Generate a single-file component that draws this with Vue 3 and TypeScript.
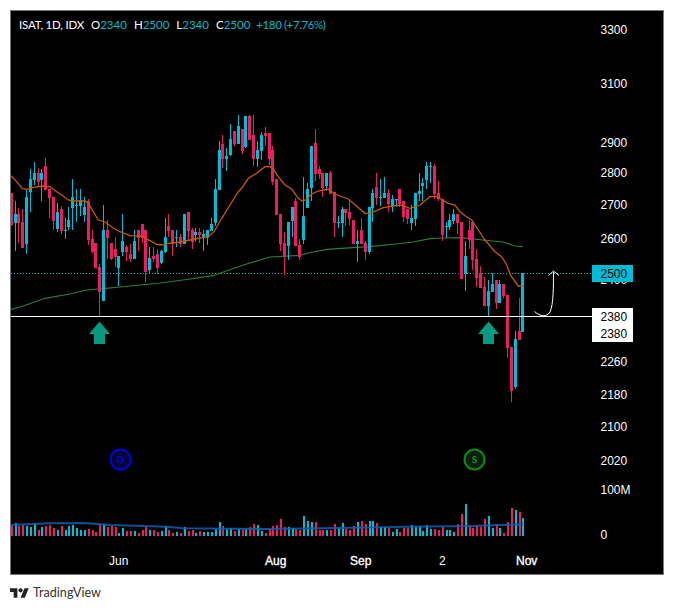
<script setup lang="ts">
type Raw = [number, number, number, number, number];

const segments: { base: number; bars: Raw[] }[] = [
  { base: 150, bars: [
    [129,129,225,228,0],[153,192,219,303,1],[175,192,219,279,0],[178,216,294,294,0],[120,141,282,312,1],
    [57,87,126,186,1],[36,69,90,105,1],[54,69,96,108,0],[57,69,90,153,1],[24,48,120,120,0],
    [117,117,144,204,0],[141,141,213,240,0],[159,186,237,246,1],[168,177,243,252,0],[204,240,243,267,1],
    [171,210,231,240,1],[87,141,174,240,1],[117,165,168,216,1],[117,150,168,198,1],[141,171,195,216,1],
    [147,153,270,285,0],[240,267,306,309,0],[279,279,354,354,0],[342,351,426,498,0],[165,240,453,453,1],
    [210,240,264,327,0],[279,279,327,330,0],[261,297,321,351,0],[318,318,354,408,1],[192,273,306,318,1],
    [285,291,306,333,0],[282,312,327,336,0],[240,273,327,327,1],[240,240,264,303,0],
  ] },
  { base: 110, bars: [
    [342,342,384,399,0],[360,360,486,515,0],[411,444,480,489,1],[411,438,447,456,0],[417,432,474,492,0],
    [420,423,459,462,1],[324,381,426,429,1],[312,348,363,381,0],[360,360,402,438,0],[360,381,384,411,1],
    [372,381,402,411,0],[312,312,402,402,1],[306,306,363,393,0],[354,360,396,417,0],[354,366,375,393,1],
    [354,366,375,399,0],[360,372,384,423,1],[360,360,384,405,1],[324,342,363,363,1],[207,237,339,348,1],
    [93,120,240,240,1],[75,102,147,174,0],[114,138,147,183,1],[42,87,135,138,1],[63,63,102,108,0],
    [15,48,102,102,1],[57,57,123,132,0],[18,18,111,114,1],[15,18,90,90,0],[15,75,147,168,0],
    [93,120,147,171,1],[66,75,123,150,1],[51,69,78,108,0],[69,69,147,165,0],
  ] },
  { base: 120, bars: [
    [78,90,186,195,0],[177,177,285,285,0],[282,282,372,393,0],[336,369,411,465,0],[306,306,378,420,1],
    [261,261,303,351,1],[234,243,378,378,0],[357,375,411,420,0],[171,288,360,372,1],[189,207,264,264,1],
    [78,78,204,243,1],[27,69,162,183,0],[138,147,162,177,0],[159,159,204,231,0],[159,159,198,213,1],
    [153,159,222,222,0],[216,216,309,351,0],[288,306,309,324,1],[261,267,309,351,1],[267,267,279,318,0],
    [240,276,297,315,0],[300,300,372,372,0],[330,363,372,426,1],[294,330,372,372,0],[363,369,396,420,0],
    [261,261,396,402,1],[207,219,264,306,1],[159,201,234,255,0],[177,231,234,258,1],[171,219,234,234,1],
    [207,219,252,276,0],[225,237,258,276,1],[237,237,240,261,1],[207,207,252,261,0],
  ] },
  { base: 150, bars: [
    [153,153,201,216,0],[177,177,207,222,0],[165,204,219,240,1],[129,129,207,228,1],[69,123,132,153,1],
    [84,99,108,153,1],[36,48,90,117,1],[36,48,51,99,1],[42,48,132,147,0],[93,129,147,153,0],
    [147,147,255,273,0],[216,228,231,264,1],[192,210,231,240,1],[177,192,213,222,1],[192,192,219,252,0],
    [216,216,387,387,0],[273,318,372,423,1],[210,240,270,297,0],[216,216,330,360,0],[297,327,384,411,0],
    [348,369,414,414,0],[381,411,468,468,0],[390,423,468,498,1],[369,402,426,426,1],[390,390,459,477,0],
    [390,402,459,459,1],[402,402,438,444,0],[435,435,594,624,0],[591,591,723,756,0],[543,567,711,717,1],
    [444,543,570,570,0],[369,369,546,546,1],
  ] },
];

const volumeTops: number[] = [
  258,249,258,256,258,261,249,270,261,258,255,264,270,258,270,258,255,264,270,270,
  267,270,276,252,252,261,258,261,279,264,273,273,273,279,270,258,270,270,276,273,
  258,270,279,276,279,261,273,270,279,273,276,276,276,267,246,258,267,264,273,267,
  270,267,261,252,255,273,279,267,258,255,237,261,261,264,267,270,228,243,246,246,
  270,270,270,270,252,264,
  249,267,270,258,246,243,252,243,243,249,261,261,264,276,267,276,264,264,255,261,
  258,273,255,267,267,270,261,270,270,276,252,222,192,255,264,255,261,237,228,264,
  252,264,279,246,204,210,216,234,
];

const UP = "#00bcd4";
const DOWN = "#e91e63";
const VOLUME_BASE = 536;

interface Candle {
  col: number;
  color: string;
  wickY: number;
  wickH: number;
  bodyY: number;
  bodyH: number;
  volY: number;
  volH: number;
}

const flat = segments.flatMap((s) =>
  s.bars.map((b) => ({ base: s.base, b })),
);

const candles: Candle[] = flat.map(({ base, b }, i) => {
  const [wt, bt, bb, wb, up] = b;
  const y = (v: number) => Math.round(base + v / 3);
  const volY = Math.round(440 + volumeTops[i] / 3);
  return {
    col: Math.floor(11.21 + 3.848 * i),
    color: up ? UP : DOWN,
    wickY: y(wt),
    wickH: Math.max(1, y(wb) - y(wt)),
    bodyY: y(bt),
    bodyH: Math.max(1, y(bb) - y(bt)),
    volY,
    volH: VOLUME_BASE - volY,
  };
});

const fastMa =
  "10,175.3 13.3,178 17.3,182.3 22.3,188.7 26.7,189.3 33.3,187.3 43.3,186 50,186.7 56.7,191.7 61.7,195 68.3,200 73.3,201 85,201 88.3,203.3 93.3,211.7 98.3,220 105,222 113.3,228 120,231.7 130,235.7 140,236 150,240.7 156.7,244.3 163.3,245 168.3,243.3 180,242 190,240 200,238 208.3,236.7 214,231.7 221.7,218.3 230,205 238.3,191.7 241.7,188.3 248.3,178.3 256.7,173.3 265,166.7 270,166.7 273.3,169.3 278.3,176.7 285,185 291.7,189 298.3,198.3 301.7,200.7 306,200 311.7,194 318.3,191 328.3,189 335,194 348.3,199 365,213.3 370,213.3 383.3,207.7 400,205 410,208.3 420,205 425,200.7 430,196.7 436.7,196.7 441.7,199.3 448.3,203.3 455,205 460,211.7 465,215.7 471.7,220 478.3,230 485,240 495,251.7 501.7,256.7 506.7,265 511,276 518.3,286 522.7,286";

const slowMa =
  "11,309.3 23.3,306 45,298.3 70,294 86.7,290 103.3,288.7 120,287 140,285 160,283 183,280 213,275.7 226.7,270.7 246.7,264 270,257 300,255.3 308,253 326.7,249.3 353,247.7 370,246.7 400,243.5 413,242 430,238.7 443,238 460,237.7 483,240 503,242 515,246 522.7,246.7";

const volumeMa =
  "11,525 50,523.3 83.3,523 110,525 166.7,526.7 183,528.3 266.7,529 340,528 406.7,526.7 473,526 523.3,524.3";

const priceLabels = [
  { text: "3300", y: 30 },
  { text: "3100", y: 84 },
  { text: "2900", y: 143 },
  { text: "2800", y: 173 },
  { text: "2700", y: 205 },
  { text: "2600", y: 239 },
  { text: "2400", y: 280 },
  { text: "2260", y: 362 },
  { text: "2180", y: 395 },
  { text: "2100", y: 427 },
  { text: "2020", y: 461 },
  { text: "100M", y: 490 },
  { text: "0", y: 535 },
];

const timeLabels = [
  { text: "Jun", x: 109, strong: false },
  { text: "Aug", x: 265, strong: true },
  { text: "Sep", x: 350, strong: true },
  { text: "2", x: 439, strong: false },
  { text: "Nov", x: 516, strong: true },
];

const stats = [
  { label: "O", value: "2340" },
  { label: "H", value: "2500" },
  { label: "L", value: "2340" },
  { label: "C", value: "2500" },
];

const arrows = [99.5, 488.5];
</script>

<template>
  <div class="page">
    <div class="frame">
      <div class="legend">
        <span class="symbol">ISAT, 1D, IDX</span>
        <span v-for="s in stats" :key="s.label + s.value" class="stat">
          <span class="stat-label">{{ s.label }}</span>{{ s.value }}
        </span>
        <span class="stat change">+180 (+7.76%)</span>
      </div>
      <svg class="chart" viewBox="11 11 652 563" width="652" height="563">
        <rect x="11" y="11" width="652" height="563" fill="#000" />

        <g shape-rendering="crispEdges">
          <g v-for="(c, i) in candles" :key="'v' + i">
            <rect :x="c.col" :y="c.volY" width="2" :height="c.volH" :fill="c.color" />
          </g>
        </g>
        <polyline :points="volumeMa" class="ma-volume" />

        <line x1="11" y1="273.5" x2="592" y2="273.5" class="last-price" />

        <polyline :points="slowMa" class="ma-slow" />

        <g shape-rendering="crispEdges">
          <g v-for="(c, i) in candles" :key="'c' + i">
            <rect :x="c.col" :y="c.wickY" width="1" :height="c.wickH" :fill="c.color" />
            <rect :x="c.col - 1" :y="c.bodyY" width="3" :height="c.bodyH" :fill="c.color" />
          </g>
        </g>

        <polyline :points="fastMa" class="ma-fast" />

        <rect x="11" y="316" width="581" height="1" fill="#fff" shape-rendering="crispEdges" />

        <path
          v-for="x in arrows"
          :key="x"
          :d="`M${x} 321.5 L${x + 10.5} 334 H${x + 5.5} V344 H${x - 5.5} V334 H${x - 10.5} Z`"
          fill="#089981"
        />

        <path d="M534.5 311.5 C540 316.5 547 317.5 550 312 C553.5 305 553.5 285 553.5 272" class="swoop" />
        <path d="M548.5 275.5 L553.5 271 L559 275.5" class="swoop" />

        <circle cx="120.5" cy="459.5" r="10" fill="#06062e" stroke="#0000e6" stroke-width="2" />
        <text x="120.5" y="463" class="mark mark-d">D</text>
        <circle cx="474.5" cy="459.5" r="10" fill="#0a1f14" stroke="#0a8a14" stroke-width="2" />
        <text x="474.5" y="463" class="mark mark-s">S</text>

        <text v-for="p in priceLabels" :key="p.text" x="600.5" :y="p.y + 4" class="axis">{{ p.text }}</text>

        <text
          v-for="t in timeLabels"
          :key="t.text"
          :x="t.x"
          y="565"
          class="axis"
          :class="{ strong: t.strong }"
        >{{ t.text }}</text>

        <rect x="592" y="265" width="41" height="17" fill="#00bcd4" />
        <text x="600.5" y="277.5" class="axis tag-text">2500</text>
        <rect x="592" y="308" width="41" height="34" fill="#fff" />
        <text x="600.5" y="321" class="axis tag-text">2380</text>
        <text x="600.5" y="338" class="axis tag-text">2380</text>
      </svg>
    </div>

    <footer class="brand">
      <svg class="logo" viewBox="0 4 36 18" width="19" height="10" aria-hidden="true">
        <path d="M14 22H7V11H0V4h14v18zM28 22h-8l7.5-18h8L28 22z" />
        <circle cx="20" cy="8" r="4" />
      </svg>
      <span class="brand-name">TradingView</span>
    </footer>
  </div>
</template>

<style scoped>
.page {
  width: 674px;
  height: 610px;
  box-sizing: border-box;
  padding: 10px 10px 0;
  background: #fff;
  font-family: "Lato", "Liberation Sans", sans-serif;
}
.frame {
  position: relative;
  width: 654px;
  height: 565px;
  box-sizing: border-box;
  border: 1px solid #76787f;
  background: #000;
}
.chart {
  display: block;
}
.legend {
  position: absolute;
  top: 7px;
  left: 8px;
  display: flex;
  gap: 7px;
  font-size: 11.5px;
  line-height: 14px;
  color: #00bcd4;
  white-space: nowrap;
}
.symbol,
.stat-label {
  color: #fff;
}
.symbol {
  letter-spacing: -0.2px;
}
.change {
  margin-left: -1px;
  letter-spacing: -0.4px;
}
.axis {
  font-family: "Liberation Sans", sans-serif;
  font-size: 12px;
  fill: #fff;
}
.axis.strong {
  stroke: #fff;
  stroke-width: 0.35px;
}
.tag-text {
  fill: #000;
}
.last-price {
  stroke: #00bcd4;
  stroke-width: 1;
  stroke-dasharray: 1 2;
}
.ma-fast {
  fill: none;
  stroke: #c75a08;
  stroke-width: 1.3;
}
.ma-slow {
  fill: none;
  stroke: #2e7d32;
  stroke-width: 1.2;
}
.ma-volume {
  fill: none;
  stroke: #0d5fb0;
  stroke-width: 2;
  opacity: 0.85;
}
.swoop {
  fill: none;
  stroke: #fff;
  stroke-width: 1;
}
.mark {
  font-size: 10px;
  font-weight: 700;
  text-anchor: middle;
}
.mark-d {
  fill: #0000e6;
}
.mark-s {
  fill: #0a9a14;
}
.brand {
  display: flex;
  align-items: center;
  gap: 4px;
  height: 14px;
  margin-top: 11px;
}
.logo {
  fill: #222;
}
.brand-name {
  font-size: 12.6px;
  line-height: 14px;
  color: #333;
}
</style>

<style>
html,
body {
  margin: 0;
  background: #fff;
}
</style>
